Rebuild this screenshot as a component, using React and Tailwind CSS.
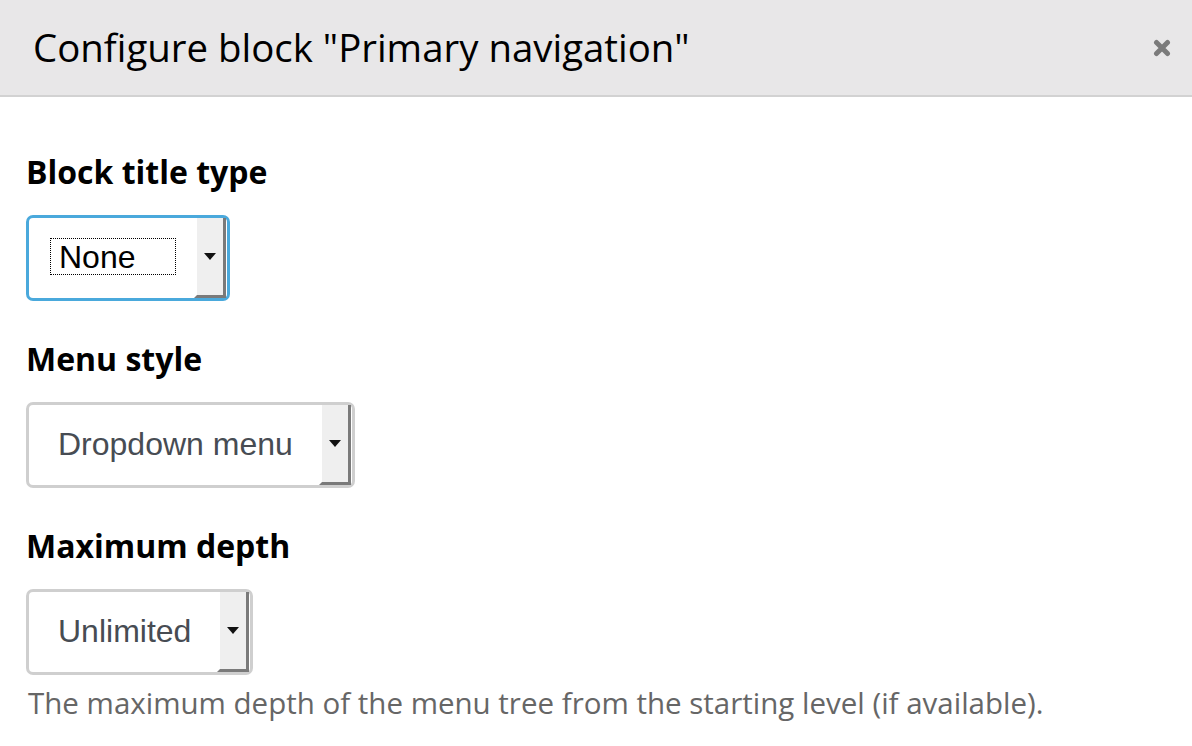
import React from "react";

function CloseIcon() {
  return (
    <svg width="18" height="18" viewBox="0 0 18 18">
      <path
        d="M3.5 3.5 L14.5 14.5 M14.5 3.5 L3.5 14.5"
        stroke="#7b7b7b"
        strokeWidth="5"
        strokeLinecap="round"
      />
    </svg>
  );
}

function FakeSelect({ value, width, focused }) {
  return (
    <div
      className={
        "flex h-[86px] rounded-[7px] border-[3px] bg-white " +
        (focused ? "border-[#4aa9dc]" : "border-[#cfcfcf]")
      }
      style={{ width }}
    >
      <div className="flex flex-1 items-center pb-[3px]">
        {focused ? (
          <div className="ml-[21px] flex h-[37px] flex-1 items-center border border-dotted border-black pl-[8px] text-[32px] text-black">
            {value}
          </div>
        ) : (
          <span className="pl-[29px] text-[32px] text-[#474c53]">{value}</span>
        )}
        <div className="w-[18px]" />
      </div>
      <div className="mr-[1px] flex w-[32px] items-center justify-center border-b-[3px] border-l-[3px] border-r-[3px] border-b-[#7a7a7a] border-l-white border-r-[#7a7a7a] bg-[#efefef]">
        <svg width="12" height="7" viewBox="0 0 12 7">
          <path d="M0 0 L12 0 L6 7 Z" fill="#111" />
        </svg>
      </div>
    </div>
  );
}

function Field({ label, children, first }) {
  return (
    <div className={first ? "" : "mt-[38px]"}>
      <div className="h-[40px] text-[32px] font-bold leading-[40px] text-black">
        {label}
      </div>
      <div className="mt-[23px]">{children}</div>
    </div>
  );
}

export default function App() {
  return (
    <div className="min-h-[746px] w-[1192px] bg-white font-['Open_Sans',sans-serif]">
      <div className="flex h-[97px] items-center justify-between border-b-2 border-[#d2d2d2] bg-[#e8e7e8] pl-[33px] pr-[21px]">
        <h1 className="text-[38.4px] leading-none text-black">
          Configure block "Primary navigation"
        </h1>
        <CloseIcon />
      </div>

      <div className="px-[26px] pt-[55px]">
        <Field label="Block title type" first>
          <div className="font-['Liberation_Sans',Arial,sans-serif]">
            <FakeSelect value="None" width={204} focused />
          </div>
        </Field>
        <Field label="Menu style">
          <div className="font-['Liberation_Sans',Arial,sans-serif]">
            <FakeSelect value="Dropdown menu" width={329} />
          </div>
        </Field>
        <Field label="Maximum depth">
          <div className="font-['Liberation_Sans',Arial,sans-serif]">
            <FakeSelect value="Unlimited" width={227} />
          </div>
        </Field>
        <p className="mt-[10px] pl-[2px] text-[29.5px] leading-[36px] text-[#666]">
          The maximum depth of the menu tree from the starting level (if
          available).
        </p>
      </div>
    </div>
  );
}
